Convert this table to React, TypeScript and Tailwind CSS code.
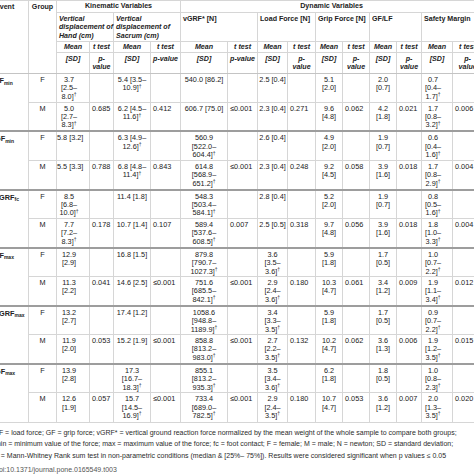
import React from "react";

type Cell = string | string[];

type Group = {
  label: string;
  sub: string;
  f: Cell[];
  m: Cell[];
};

const colWidths = [38, 28, 33, 24, 37, 30, 47, 30, 30, 28, 27, 27, 27, 25, 31, 30];

const groups: Group[] = [
  {
    label: "LF",
    sub: "min",
    f: [["3.7", "[2.5–", "8.0]†"], "", ["5.4 [3.5–", "10.9]†"], "", "540.0 [86.2]", "", "2.5 [0.4]", "", ["5.1", "[2.0]"], "", ["2.0", "[0.7]"], "", ["0.7", "[0.4–", "1.7]†"], ""],
    m: [["5.0", "[2.7–", "8.3]†"], "0.685", ["6.2 [4.5–", "11.6]†"], "0.412", "606.7 [75.0]", "≤0.001", "2.3 [0.4]", "0.271", ["9.6", "[4.8]"], "0.062", ["4.2", "[1.8]"], "0.021", ["1.7", "[0.8–", "3.2]†"], "0.006"],
  },
  {
    label: "GF",
    sub: "min",
    f: ["5.8 [3.2]", "", ["6.3 [4.9–", "12.6]†"], "", ["560.9", "[522.0–", "604.4]†"], "", "2.6 [0.4]", "", ["4.9", "[2.0]"], "", ["1.9", "[0.7]"], "", ["0.6", "[0.4–", "1.6]†"], ""],
    m: ["5.5 [3.3]", "0.788", ["6.8 [4.8–", "11.4]†"], "0.843", ["614.8", "[568.9–", "651.2]†"], "≤0.001", "2.3 [0.4]", "0.248", ["9.2", "[4.5]"], "0.058", ["3.9", "[1.6]"], "0.018", ["1.7", "[0.8–", "2.9]†"], "0.004"],
  },
  {
    label: "vGRF",
    sub: "fc",
    f: [["8.5", "[6.8–", "10.0]†"], "", "11.4 [1.8]", "", ["548.3", "[503.4–", "584.1]†"], "", "2.8 [0.4]", "", ["5.2", "[2.0]"], "", ["1.9", "[0.7]"], "", ["0.8", "[0.5–", "1.6]†"], ""],
    m: [["7.7", "[7.2–", "8.3]†"], "0.178", "10.7 [1.4]", "0.107", ["589.4", "[537.6–", "608.5]†"], "0.007", "2.5 [0.5]", "0.318", ["9.7", "[4.8]"], "0.056", ["3.9", "[1.6]"], "0.018", ["1.8", "[1.0–", "3.3]†"], "0.004"],
  },
  {
    label: "LF",
    sub: "max",
    f: [["12.9", "[2.9]"], "", "16.8 [1.5]", "", ["879.8", "[790.7–", "1027.3]†"], "", ["3.6", "[3.5–", "3.6]†"], "", ["5.9", "[1.8]"], "", ["1.7", "[0.5]"], "", ["1.0", "[0.7–", "2.2]†"], ""],
    m: [["11.3", "[2.2]"], "0.041", "14.6 [2.5]", "≤0.001", ["751.6", "[685.5–", "842.1]†"], "≤0.001", ["2.9", "[2.4–", "3.6]†"], "0.180", ["10.3", "[4.7]"], "0.061", ["3.4", "[1.2]"], "0.009", ["1.9", "[1.1–", "3.4]†"], "0.012"],
  },
  {
    label: "vGRF",
    sub: "max",
    f: [["13.2", "[2.7]"], "", "17.4 [1.2]", "", ["1058.6", "[948.8–", "1189.9]†"], "", ["3.4", "[3.3–", "3.5]†"], "", ["5.9", "[1.8]"], "", ["1.7", "[0.5]"], "", ["0.9", "[0.7–", "2.2]†"], ""],
    m: [["11.9", "[2.0]"], "0.053", "15.2 [1.9]", "≤0.001", ["858.8", "[813.2–", "983.0]†"], "≤0.001", ["2.7", "[2.2–", "3.5]†"], "0.132", ["10.2", "[4.7]"], "0.062", ["3.6", "[1.3]"], "0.006", ["1.9", "[1.2–", "3.5]†"], "0.015"],
  },
  {
    label: "GF",
    sub: "max",
    f: [["13.9", "[2.8]"], "", ["17.3", "[16.7–", "18.3]†"], "", ["855.1", "[813.2–", "935.3]†"], "", ["3.5", "[3.4–", "3.6]†"], "", ["6.2", "[1.8]"], "", ["1.8", "[0.5]"], "", ["1.0", "[0.8–", "2.3]†"], ""],
    m: [["12.6", "[1.9]"], "0.057", ["15.7", "[14.5–", "16.9]†"], "≤0.001", ["733.4", "[689.0–", "782.5]†"], "≤0.001", ["2.9", "[2.4–", "3.5]†"], "0.180", ["10.7", "[4.7]"], "0.053", ["3.6", "[1.2]"], "0.007", ["2.0", "[1.3–", "3.5]†"], "0.020"],
  },
];

const subHeads: string[][] = [
  ["Vertical", "displacement of", "Hand (cm)"],
  ["Vertical", "displacement of", "Sacrum (cm)"],
  ["vGRF* [N]"],
  ["Load Force [N]"],
  ["Grip Force [N]"],
  ["GF/LF"],
  ["Safety Margin"],
];

// which t-test columns fit "p-value" on one line
const pWide = [false, true, true, false, false, false, false];

const line = "border border-[#d6d6d6]";

// per data column: mean cells are centred (some sit a bit left), t-test values hug the left
function cellAlign(i: number) {
  if (i % 2 === 1) return "pl-[2px] text-left";
  if (i === 0 || i === 12) return "pr-[8px] text-center";
  return "text-center";
}

function Val({ v }: { v: Cell }) {
  const lines = typeof v === "string" ? (v ? [v] : []) : v;
  return (
    <>
      {lines.map((l, i) => {
        const dag = l.endsWith("†");
        const t = dag ? l.slice(0, -1) : l;
        return (
          <div key={i} className="whitespace-nowrap">
            {t}
            {dag && <span className="relative -top-[2.5px] text-[5px]">†</span>}
          </div>
        );
      })}
    </>
  );
}

export default function App() {
  return (
    <div
      className="h-[474px] w-[474px] overflow-hidden bg-white text-[#222]"
      style={{ fontFamily: '"Liberation Sans", Arial, sans-serif' }}
    >
      <div className="-ml-[10px]">
        <table className="w-[492px] table-fixed border-collapse text-[7.3px] leading-[8.4px]">
          <colgroup>
            {colWidths.map((w, i) => (
              <col key={i} style={{ width: w }} />
            ))}
          </colgroup>
          <thead className="text-[7.1px] font-bold">
            <tr className="h-[12px]">
              <th rowSpan={4} className={`${line} border-b-[#c4c4c4] pl-[4px] pt-[2px] text-left align-top`}>
                Event
              </th>
              <th rowSpan={4} className={`${line} border-b-[#c4c4c4] pt-[2px] text-center align-top`}>
                Group
              </th>
              <th colSpan={4} className={`${line} text-center align-middle`}>
                Kinematic Variables
              </th>
              <th colSpan={10} className={`${line} text-center align-middle`}>
                Dynamic Variables
              </th>
            </tr>
            <tr className="h-[29px]">
              {subHeads.map((h, i) => (
                <th
                  key={i}
                  colSpan={2}
                  className={`${line} pl-[2px] pt-[2px] text-left align-top ${i < 2 ? "italic" : ""}`}
                >
                  {h.map((l) => (
                    <div key={l} className="whitespace-nowrap">
                      {l}
                    </div>
                  ))}
                </th>
              ))}
            </tr>
            <tr className="h-[11px]">
              {subHeads.map((_, i) => (
                <React.Fragment key={i}>
                  <th className={`${line} text-center align-middle italic`}>Mean</th>
                  <th className={`${line} whitespace-nowrap text-center align-middle italic`}>t test</th>
                </React.Fragment>
              ))}
            </tr>
            <tr className="h-[21px]">
              {subHeads.map((_, i) => (
                <React.Fragment key={i}>
                  <th className={`${line} border-b-[#c4c4c4] pt-[2px] text-center align-top italic`}>[SD]</th>
                  <th className={`${line} border-b-[#c4c4c4] pt-[2px] text-center align-top italic`}>
                    {pWide[i] ? (
                      <div className="whitespace-nowrap">p-value</div>
                    ) : (
                      <>
                        <div>p-</div>
                        <div>value</div>
                      </>
                    )}
                  </th>
                </React.Fragment>
              ))}
            </tr>
          </thead>
          <tbody>
            {groups.map((g, gi) => {
              const sep = gi > 0 ? "border-t-2 border-t-[#9d9d9d]" : "";
              return (
                <React.Fragment key={gi}>
                  <tr className="h-[28.6px]">
                    <td
                      rowSpan={2}
                      className={`${line} ${sep} whitespace-nowrap pl-[4px] pt-[3px] text-left align-top font-bold`}
                    >
                      {g.label}
                      <span className="relative top-[1.5px] text-[5px]">{g.sub}</span>
                    </td>
                    <td className={`${line} ${sep} pt-[2px] text-center align-top`}>F</td>
                    {g.f.map((v, i) => (
                      <td key={i} className={`${line} ${sep} pt-[2px] align-top ${cellAlign(i)}`}>
                        <Val v={v} />
                      </td>
                    ))}
                  </tr>
                  <tr className="h-[29.4px]">
                    <td className={`${line} pt-[2px] text-center align-top`}>M</td>
                    {g.m.map((v, i) => (
                      <td key={i} className={`${line} pt-[2px] align-top ${cellAlign(i)}`}>
                        <Val v={v} />
                      </td>
                    ))}
                  </tr>
                </React.Fragment>
              );
            })}
          </tbody>
        </table>

        <div className="pl-[5px] pt-[4px] text-[7px] leading-[11.5px] text-[#2b2b2b]">
          <p className="whitespace-nowrap">
            LF = load force; GF = grip force; vGRF* = vertical ground reaction force normalized by the mean weight of the whole sample to compare both groups;
          </p>
          <p className="whitespace-nowrap">
            min = minimum value of the force; max = maximum value of the force; fc = foot contact; F = female; M = male; N = newton; SD = standard deviation;
          </p>
          <p className="whitespace-nowrap">
            † = Mann-Whitney Rank sum test in non-parametric conditions (median &amp; [25%– 75%]). Results were considered significant when p values ≤ 0.05
          </p>
          <p className="mt-[3px] whitespace-nowrap text-[#555]">doi:10.1371/journal.pone.0165549.t003</p>
        </div>
      </div>
    </div>
  );
}
